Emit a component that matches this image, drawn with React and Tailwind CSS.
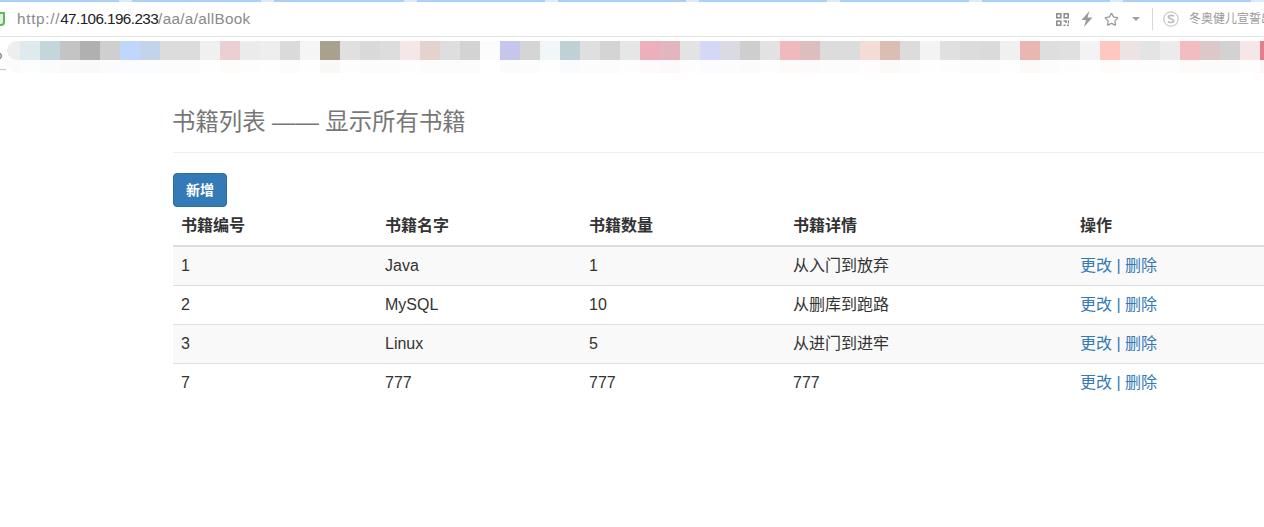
import { Star } from 'lucide-react';

const cjk = { fontFamily: '"Liberation Sans", "Noto Sans CJK SC", sans-serif' };

const tabs = [120, 130, 130, 129, 129, 129, 129, 129, 129];

const mosaic = [
  '#dfeaee', '#c2d6dc', '#c4c4c4', '#b0b0b0', '#cfcfcf', '#bfd7fb', '#c3d3e9', '#dcdcdc', '#dcdcdc', '#f0f0f0',
  '#eccfd2', '#ebebeb', '#eeeeee', '#dadada', '#f5f5f5', '#a9a08d', '#e0e0e0', '#d9d9d9', '#dddddd', '#f5e7e8',
  '#e3d2ce', '#dedede', '#d3d3d3', '#fcfcfc', '#c6c6ec', '#d5d5d5', '#f1f6f9', '#bfd1d7', '#dfdfdf', '#d4d4d4',
  '#e6e6e6', '#edafbb', '#e3b6bf', '#e3e3e3', '#d5d7f6', '#dadae3', '#cecece', '#e2e2e2', '#f0b9bd', '#debdc0',
  '#dcdcdc', '#dcdcdc', '#f5dbd5', '#dbbdb3', '#dcdcdc', '#f3f3f3', '#e0e0e0', '#dcdcdc', '#dadada', '#f0f0f0',
  '#eab6b2', '#dedede', '#e0e0e0', '#f3f3f3', '#fec8c0', '#eee3e3', '#e4e4e4', '#ebebeb', '#f3bcc0', '#dcc8c8',
  '#d2d2d2', '#f7e6e7', '#e08088',
];

const books = [
  { id: 1, name: 'Java', count: 1, detail: '从入门到放弃' },
  { id: 2, name: 'MySQL', count: 10, detail: '从删库到跑路' },
  { id: 3, name: 'Linux', count: 5, detail: '从进门到进牢' },
  { id: 7, name: '777', count: 777, detail: '777' },
];

function QrIcon() {
  return (
    <svg width="13" height="13" viewBox="0 0 13 13" fill="none" stroke="#8f8f8f" strokeWidth="1.6">
      <rect x="0.8" y="0.8" width="4" height="4" />
      <rect x="8.200" y="0.8" width="4" height="4" />
      <rect x="0.8" y="8.200" width="4" height="4" />
      <path d="M7.500 8h2.500v2M12.500 7.500v3M7.500 12.200h2M11 12.200h2" />
    </svg>
  );
}

function BoltIcon() {
  return (
    <svg width="12" height="16" viewBox="0 0 12 16" fill="#9a9a9a">
      <path d="M8.500 0 0.500 9h4.500l-2 7 8.500-9.500H6.500z" />
    </svg>
  );
}

function SogouIcon() {
  return (
    <svg width="16" height="16" viewBox="0 0 16 16" fill="none">
      <circle cx="8" cy="8" r="7.200" stroke="#c9c9c9" strokeWidth="1.200" />
      <path d="M11 5.200C10 4.200 6 3.800 5.400 5.800 5 7.800 11 7.600 10.800 10 10.300 12 6.200 11.800 4.800 10.600" stroke="#bdbdbd" strokeWidth="1.700" />
    </svg>
  );
}

function AddressBar() {
  return (
    <div className="flex h-[34px] items-center border-b border-[#e4e4e4] box-content">
      <div className="h-[14px] w-[5px] rounded-br-[4px] rounded-tr-[1px] border-2 border-l-0 border-[#5cb85c] bg-[#dff3df]" />
      <div className="ml-3 text-[15.300px] text-[#8a8a8a]">
        <span className="tracking-[0.7px]">http://</span>
        <span className="tracking-[-0.6px] text-[#222222]">47.106.196.233</span>
        <span className="tracking-[0.3px]">/aa/a/allBook</span>
      </div>
      <div className="ml-auto flex items-center">
        <QrIcon />
        <div className="ml-[12px]"><BoltIcon /></div>
        <Star className="ml-[11px] text-[#9a9a9a]" size={15} strokeWidth={2} />
        <div className="ml-[13px] h-0 w-0 border-x-[4px] border-t-[4px] border-x-transparent border-t-[#a0a0a0]" />
        <div className="ml-[12px] h-[22px] w-px bg-[#d8d8d8]" />
        <div className="ml-[10px]"><SogouIcon /></div>
        <div className="ml-[10px] w-[75px] overflow-hidden whitespace-nowrap text-[12px] text-[#999999]">冬奥健儿宣誓出</div>
      </div>
    </div>
  );
}

function BookmarkBar() {
  return (
    <div className="relative mt-1 h-[32px] overflow-hidden">
      <div className="flex pl-5">
        {mosaic.map((c, i) => (
          <div key={i} className="w-5 shrink-0">
            <div className="h-[19px]" style={{ backgroundColor: c }} />
            <div className="h-[13px] opacity-[0.08]" style={{ backgroundColor: c }} />
          </div>
        ))}
      </div>
      <div className="absolute left-[7px] top-0 h-[19px] w-[13px] rounded-l-[10px] bg-[#eeeeee]" />
      <div className="absolute left-[7px] top-[19px] h-[13px] w-[13px] rounded-bl-[10px] bg-[#fbfbfb]" />
      <div className="absolute left-0 top-[9px] -ml-1 text-[11px] leading-none text-[#555555]">o</div>
      <div className="absolute left-0 top-[28px] h-px w-[6px] bg-[#c4c4c4]" />
    </div>
  );
}

export default function App() {
  return (
    <div className="h-[527px] w-[1264px] overflow-hidden bg-white" style={cjk}>
      <div className="flex h-[2px] bg-[#dcebfb]">
        {tabs.map((w, i) => (
          <div key={i} className="mr-[13px] h-full bg-[#a9d0f7]" style={{ width: w }} />
        ))}
      </div>
      <AddressBar />
      <BookmarkBar />

      <div className="ml-[173px] w-[1091px] pt-[29px]">
        <div className="border-b border-[#eeeeee] pb-[10px]">
          <h1 className="-ml-px text-[23.400px] leading-[40px] font-normal text-[#777777]">书籍列表 —— 显示所有书籍</h1>
        </div>

        <button className="mt-5 block h-[34px] w-[54px] rounded border border-[#2e6da4] bg-[#337ab7] text-[14px] font-bold text-white">
          新增
        </button>

        <table className="w-[1091px] table-fixed border-collapse text-[16px] text-[#333333]">
          <thead>
            <tr className="h-[39px] border-b-2 border-[#dddddd] text-left">
              <th className="w-[204px] px-2 font-bold">书籍编号</th>
              <th className="w-[204px] px-2 font-bold">书籍名字</th>
              <th className="w-[204px] px-2 font-bold">书籍数量</th>
              <th className="w-[287px] px-2 font-bold">书籍详情</th>
              <th className="px-2 font-bold">操作</th>
            </tr>
          </thead>
          <tbody>
            {books.map((b, i) => (
              <tr key={b.id} className={`h-[39px] ${i < 3 ? 'border-b border-[#dddddd]' : ''} ${i % 2 === 0 ? 'bg-[#f9f9f9]' : 'bg-white'}`}>
                <td className="px-2">{b.id}</td>
                <td className="px-2">{b.name}</td>
                <td className="px-2">{b.count}</td>
                <td className="px-2">{b.detail}</td>
                <td className="px-2 text-[#337ab7]">
                  <a href="#">更改</a> | <a href="#">删除</a>
                </td>
              </tr>
            ))}
          </tbody>
        </table>
      </div>
    </div>
  );
}
